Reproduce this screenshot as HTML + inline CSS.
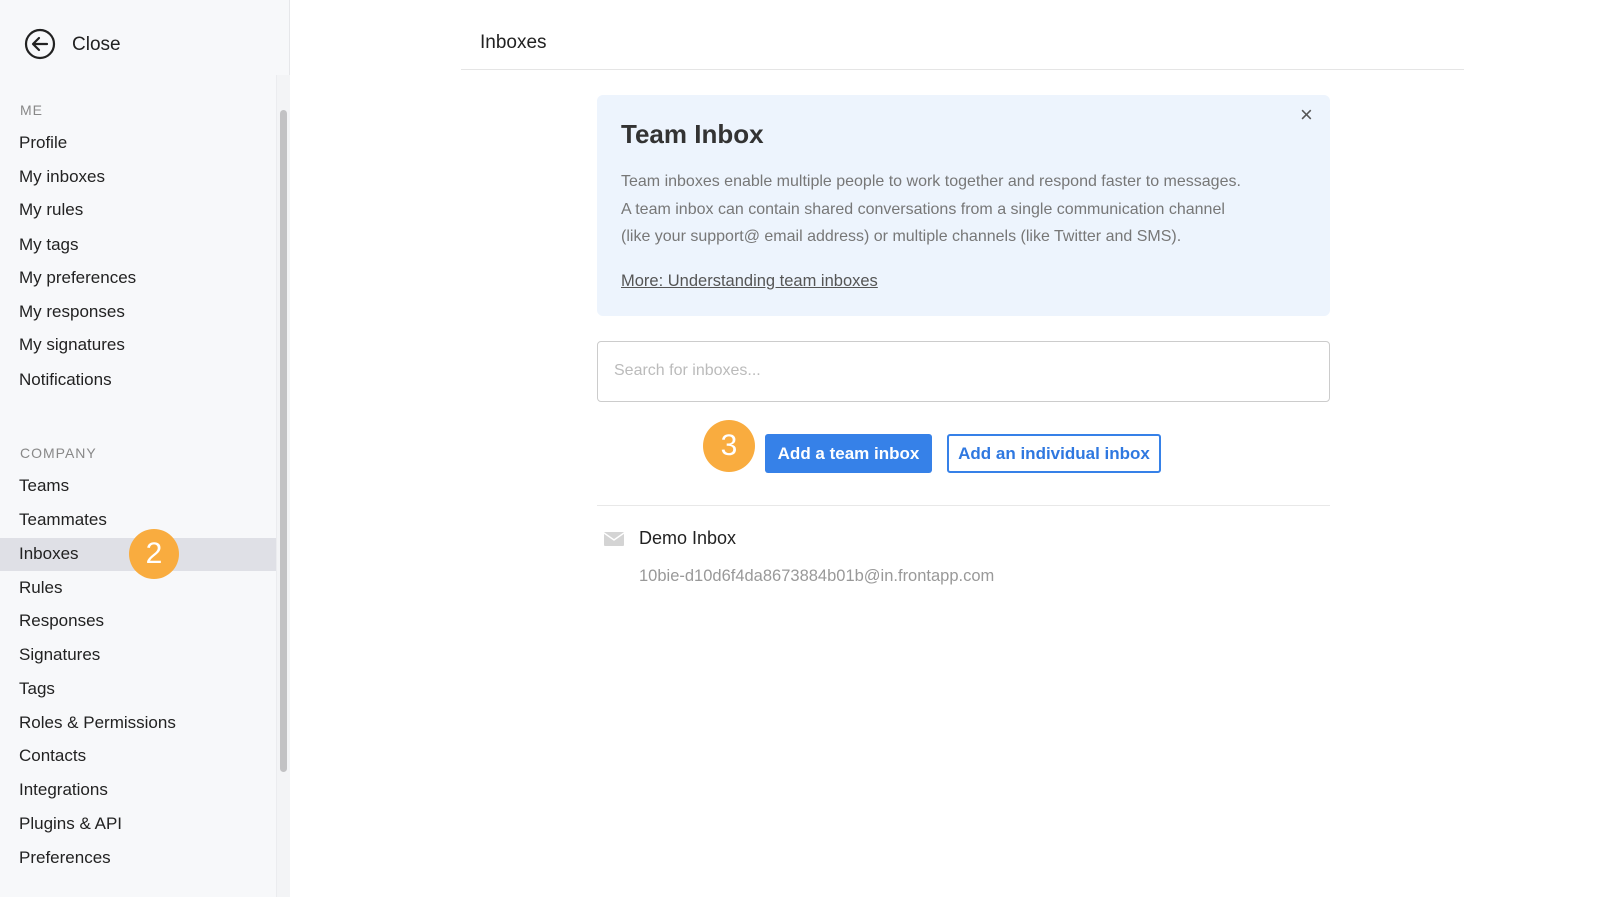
<!DOCTYPE html>
<html><head><meta charset="utf-8"><style>
*{margin:0;padding:0;box-sizing:border-box}
body{width:1600px;height:897px;overflow:hidden;background:#fff;font-family:"Liberation Sans",sans-serif;position:relative;color:#222}
.sb{position:absolute;left:0;top:0;width:290px;height:897px;background:#f7f8fa;border-right:1px solid #e6e7ea}
.sbtrack{position:absolute;left:276px;top:75px;width:14px;height:822px;background:#f3f4f6;border-left:1px solid #ebecef}
.thumb{position:absolute;left:280px;top:110px;width:7px;height:662px;background:#c2c2c4;border-radius:4px}
.it{position:absolute;left:19px;font-size:17px;color:#222;line-height:20px}
.hd{position:absolute;left:20px;font-size:14px;color:#888;letter-spacing:1px}
.hl{position:absolute;left:0;top:538px;width:276px;height:33px;background:#dfe0e6}
.badge{position:absolute;width:50px;height:50px;border-radius:50%;background:#f9ac3f;color:#fff;font-size:30px;text-align:center;line-height:50px}
</style></head><body>
<div class="sb"></div>
<div class="sbtrack"></div><div class="thumb"></div>
<svg style="position:absolute;left:24px;top:28px" width="32" height="32" viewBox="0 0 32 32"><circle cx="16" cy="16" r="14" fill="none" stroke="#222" stroke-width="2.2"/><path d="M23 16H10M15 10l-6 6 6 6" fill="none" stroke="#222" stroke-width="2.2" stroke-linecap="round" stroke-linejoin="round"/></svg>
<div class="it" style="left:72px;top:35px;font-size:19px">Close</div>
<div class="hd" style="top:102px">ME</div>
<div class="it" style="top:133px">Profile</div>
<div class="it" style="top:167px">My inboxes</div>
<div class="it" style="top:200px">My rules</div>
<div class="it" style="top:235px">My tags</div>
<div class="it" style="top:268px">My preferences</div>
<div class="it" style="top:302px">My responses</div>
<div class="it" style="top:335px">My signatures</div>
<div class="it" style="top:370px">Notifications</div>
<div class="hd" style="top:445px">COMPANY</div>
<div class="it" style="top:476px">Teams</div>
<div class="it" style="top:510px">Teammates</div>
<div class="hl"></div>
<div class="it" style="top:544px">Inboxes</div>
<div class="badge" style="left:129px;top:529px">2</div>
<div class="it" style="top:578px">Rules</div>
<div class="it" style="top:611px">Responses</div>
<div class="it" style="top:645px">Signatures</div>
<div class="it" style="top:679px">Tags</div>
<div class="it" style="top:713px">Roles &amp; Permissions</div>
<div class="it" style="top:746px">Contacts</div>
<div class="it" style="top:780px">Integrations</div>
<div class="it" style="top:814px">Plugins &amp; API</div>
<div class="it" style="top:848px">Preferences</div>

<div style="position:absolute;left:480px;top:32px;font-size:19px;color:#222">Inboxes</div>
<div style="position:absolute;left:461px;top:69px;width:1003px;height:1px;background:#e5e5e5"></div>

<div style="position:absolute;left:597px;top:95px;width:733px;height:221px;background:#edf4fd;border-radius:6px"></div>
<div style="position:absolute;left:621px;top:119px;font-size:26px;color:#333;font-weight:bold">Team Inbox</div>
<div style="position:absolute;left:1300px;top:102px;font-size:22px;color:#555">×</div>
<div style="position:absolute;left:621px;top:168px;width:680px;font-size:16px;line-height:27.5px;color:#777">Team inboxes enable multiple people to work together and respond faster to messages.<br>A team inbox can contain shared conversations from a single communication channel<br>(like your support@ email address) or multiple channels (like Twitter and SMS).</div>
<div style="position:absolute;left:621px;top:272px;font-size:16.5px;color:#555;text-decoration:underline">More: Understanding team inboxes</div>

<div style="position:absolute;left:597px;top:341px;width:733px;height:61px;border:1px solid #ccc;border-radius:4px"></div>
<div style="position:absolute;left:614px;top:362px;font-size:16px;color:#bbb">Search for inboxes...</div>

<div class="badge" style="left:703px;top:420px;width:52px;height:52px;line-height:52px">3</div>
<div style="position:absolute;left:765px;top:434px;width:167px;height:39px;background:#3681e8;border-radius:3px;color:#fff;font-size:17px;font-weight:bold;text-align:center;line-height:39px">Add a team inbox</div>
<div style="position:absolute;left:947px;top:434px;width:214px;height:39px;border:2px solid #3681e8;border-radius:3px;color:#2f78e0;font-size:17px;font-weight:bold;text-align:center;line-height:35px">Add an individual inbox</div>

<div style="position:absolute;left:597px;top:505px;width:733px;height:1px;background:#e8e8e8"></div>
<svg style="position:absolute;left:604px;top:532px" width="20" height="14" viewBox="0 0 20 14"><rect width="20" height="14" rx="1" fill="#d4d4d4"/><path d="M0 1l10 7 10-7" fill="none" stroke="#fff" stroke-width="1.5"/></svg>
<div style="position:absolute;left:639px;top:528px;font-size:18px;color:#222">Demo Inbox</div>
<div style="position:absolute;left:639px;top:567px;font-size:16.5px;color:#999">10bie-d10d6f4da8673884b01b@in.frontapp.com</div>
</body></html>
